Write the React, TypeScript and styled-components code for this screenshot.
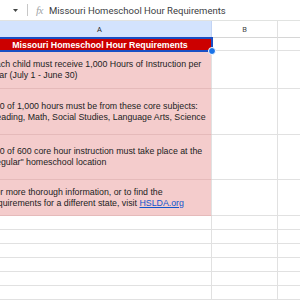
import React from 'react';
import styled, { createGlobalStyle } from 'styled-components';

const GlobalStyle = createGlobalStyle`
  html, body {
    margin: 0;
    padding: 0;
    background: #ffffff;
  }
  body {
    font-family: "Liberation Sans", Arial, sans-serif;
  }
`;

const Screen = styled.div`
  width: 300px;
  height: 300px;
  overflow: hidden;
  background: #ffffff;
`;

const FormulaBar = styled.div`
  height: 21px;
  box-sizing: border-box;
  border-bottom: 1px solid #e1e3e1;
  display: flex;
  align-items: center;
  padding-left: 13px;
`;

const Arrow = styled.svg`
  width: 5px;
  height: 3px;
  margin-top: 1px;
`;

const Divider = styled.div`
  width: 1px;
  height: 12px;
  background: #c7c7c7;
  margin: 0 8px 0 9px;
`;

const Fx = styled.span`
  font-family: "Liberation Serif", "Times New Roman", serif;
  font-style: italic;
  font-size: 11px;
  color: #a0a4a8;
  margin-right: 6px;
  letter-spacing: -0.5px;
`;

const FormulaText = styled.span`
  font-family: Roboto, "Noto Sans", sans-serif;
  font-size: 9.5px;
  color: #3c4043;
  white-space: nowrap;
`;

const Sheet = styled.div`
  display: grid;
  grid-template-columns: 224px 66px 40px;
  margin-left: -12px;
`;

const HeaderCell = styled.div<{ $selected?: boolean }>`
  height: 17px;
  box-sizing: border-box;
  border-right: 1px solid ${p => (p.$selected ? '#c2d4f5' : '#e1e1e1')};
  border-bottom: 1px solid ${p => (p.$selected ? '#a8c2f0' : '#d6d6d6')};
  background: ${p => (p.$selected ? '#d3e3fd' : '#ffffff')};
  color: ${p => (p.$selected ? '#1f1f1f' : '#444746')};
  font-family: Roboto, "Noto Sans", sans-serif;
  font-size: 7.5px;
  display: flex;
  align-items: center;
  justify-content: center;
`;

const Cell = styled.div<{ $h: number; $bg?: string }>`
  height: ${p => p.$h}px;
  box-sizing: border-box;
  border-right: 1px solid #e1e1e1;
  border-bottom: 1px solid ${p => (p.$bg ? 'rgba(120, 60, 60, 0.12)' : '#e1e1e1')};
  background: ${p => p.$bg || '#ffffff'};
  display: flex;
  flex-direction: column;
  justify-content: center;
  padding: 0 2px;
  overflow: hidden;
`;

const TitleCell = styled.div`
  position: relative;
  height: 13px;
  box-sizing: border-box;
  background: #cc0000;
  color: #ffffff;
  font-weight: bold;
  font-size: 8.8px;
  display: flex;
  align-items: center;
  justify-content: center;
  white-space: nowrap;

  &::after {
    content: '';
    position: absolute;
    inset: -1px -1px -1px 0;
    border: 2px solid #1a4fc4;
    border-left: none;
    pointer-events: none;
  }
`;

const Handle = styled.span`
  position: absolute;
  right: -4px;
  bottom: -4px;
  width: 6px;
  height: 6px;
  border-radius: 50%;
  background: #1a73e8;
  border: 1px solid #ffffff;
  z-index: 2;
`;

const Line = styled.div`
  font-size: 8.8px;
  line-height: 11px;
  color: #222222;
  white-space: nowrap;
`;

const Link = styled.span`
  color: #1155cc;
  text-decoration: underline;
`;

type Row = {
  height: number;
  lines: React.ReactNode[];
};

const rows: Row[] = [
  {
    height: 38,
    lines: [
      'Each child must receive 1,000 Hours of Instruction per',
      'year (July 1 - June 30)',
    ],
  },
  {
    height: 46,
    lines: [
      '500 of 1,000 hours must be from these core subjects:',
      'Reading, Math, Social Studies, Language Arts, Science',
    ],
  },
  {
    height: 45,
    lines: [
      '300 of 600 core hour instruction must take place at the',
      '"regular" homeschool location',
    ],
  },
  {
    height: 36,
    lines: [
      'For more thorough information, or to find the',
      <>
        requirements for a different state, visit <Link>HSLDA.org</Link>
      </>,
    ],
  },
];

const emptyRows = 6;

export default function App() {
  return (
    <Screen>
      <GlobalStyle />
      <FormulaBar>
        <Arrow viewBox="0 0 5 3">
          <path d="M0 0 L5 0 L2.5 3 Z" fill="#444746" />
        </Arrow>
        <Divider />
        <Fx>fx</Fx>
        <FormulaText>Missouri Homeschool Hour Requirements</FormulaText>
      </FormulaBar>
      <Sheet>
        <HeaderCell $selected>A</HeaderCell>
        <HeaderCell>B</HeaderCell>
        <HeaderCell />

        <TitleCell>
          Missouri Homeschool Hour Requirements
          <Handle />
        </TitleCell>
        <Cell $h={13} />
        <Cell $h={13} />

        {rows.map((row, i) => (
          <React.Fragment key={i}>
            <Cell $h={row.height} $bg="#f4cccc">
              {row.lines.map((line, j) => (
                <Line key={j}>{line}</Line>
              ))}
            </Cell>
            <Cell $h={row.height} />
            <Cell $h={row.height} />
          </React.Fragment>
        ))}

        {Array.from({ length: emptyRows }).map((_, i) => (
          <React.Fragment key={'e' + i}>
            <Cell $h={14} />
            <Cell $h={14} />
            <Cell $h={14} />
          </React.Fragment>
        ))}
      </Sheet>
    </Screen>
  );
}
